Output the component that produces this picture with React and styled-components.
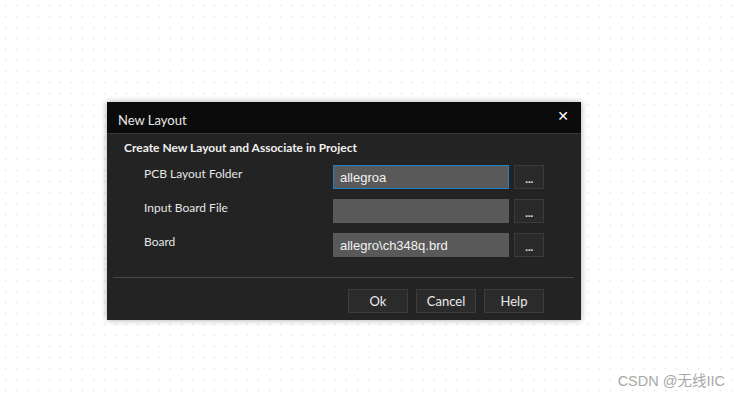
import React from 'react';
import styled, { createGlobalStyle } from 'styled-components';

const GlobalStyle = createGlobalStyle`
  html, body {
    margin: 0;
    padding: 0;
    background: #ffffff;
  }
  body {
    font-family: "Lato", "Open Sans", sans-serif;
  }
`;

const Page = styled.div`
  position: relative;
  width: 733px;
  height: 397px;
  box-sizing: border-box;
  padding: 102px 0 0 107px;
  background-color: #fff;
  background-image: radial-gradient(circle, #ececec 0.8px, transparent 1.2px);
  background-size: 11px 11px;
  overflow: hidden;
`;

const Dialog = styled.div`
  width: 474px;
  height: 218px;
  background: #232323;
  display: flex;
  flex-direction: column;
  box-shadow: 0 0 6px rgba(0, 0, 0, 0.35);
`;

const TitleBar = styled.div`
  height: 32px;
  box-sizing: border-box;
  background: #0b0b0b;
  border-bottom: 1px solid #3a3a3a;
  display: flex;
  align-items: center;
  justify-content: space-between;
  padding: 4px 12px 0 11px;
  color: #e8e8e8;
  font-size: 13px;
`;

const Close = styled.span`
  color: #fff;
  font-family: "DejaVu Sans", sans-serif;
  font-size: 14px;
  font-weight: bold;
  line-height: 1;
  margin-top: -8px;
`;

const Body = styled.div`
  flex: 1;
  display: flex;
  flex-direction: column;
  padding: 2px 7px 0 6px;
`;

const Heading = styled.div`
  color: #f0f0f0;
  font-size: 12px;
  font-weight: 700;
  padding-left: 11px;
  height: 22px;
  display: flex;
  align-items: center;
`;

const Form = styled.div`
  display: grid;
  grid-template-columns: 184px 176px 30px;
  column-gap: 5px;
  row-gap: 10px;
  padding-left: 31px;
  margin-top: 7px;
  align-items: center;
`;

const Label = styled.div`
  color: #e6e6e6;
  font-size: 12px;
  align-self: start;
  padding-top: 1px;
`;

const Field = styled.div`
  height: 24px;
  box-sizing: border-box;
  background: #595959;
  border: 1px solid ${p => (p.focused ? '#1d7fc6' : '#595959')};
  color: #f2f2f2;
  font-family: "Liberation Sans", Arial, sans-serif;
  font-size: 13px;
  display: flex;
  align-items: center;
  padding-left: 6px;
`;

const Browse = styled.div`
  height: 24px;
  box-sizing: border-box;
  background: #2a2a2a;
  border: 1px solid #3b3b3b;
  color: #e0e0e0;
  font-family: "Open Sans", sans-serif;
  font-size: 11px;
  font-weight: 700;
  display: flex;
  align-items: center;
  justify-content: center;
  padding-top: 2px;
  letter-spacing: -0.5px;
`;

const Divider = styled.div`
  height: 1px;
  background: #474747;
  margin: 20px 0 0 0;
`;

const Footer = styled.div`
  display: flex;
  justify-content: flex-end;
  gap: 8px;
  padding: 11px 30px 0 0;
`;

const Button = styled.div`
  width: 60px;
  height: 24px;
  box-sizing: border-box;
  background: #2b2b2b;
  border: 1px solid #3c3c3c;
  color: #ececec;
  font-size: 13px;
  display: flex;
  align-items: center;
  justify-content: center;
`;

const Watermark = styled.div`
  position: absolute;
  right: 8px;
  bottom: 7px;
  color: #a8a8a8;
  font-family: "Liberation Sans", "Noto Sans CJK SC", sans-serif;
  font-size: 14.5px;
`;

const rows = [
  { label: 'PCB Layout Folder', value: 'allegroa', focused: true },
  { label: 'Input Board File', value: '' },
  { label: 'Board', value: 'allegro\\ch348q.brd' },
];

export default function App() {
  return (
    <>
      <GlobalStyle />
      <Page>
        <Dialog>
          <TitleBar>
            <span>New Layout</span>
            <Close>✕</Close>
          </TitleBar>
          <Body>
            <Heading>Create New Layout and Associate in Project</Heading>
            <Form>
              {rows.map(r => (
                <React.Fragment key={r.label}>
                  <Label>{r.label}</Label>
                  <Field focused={r.focused}>{r.value}</Field>
                  <Browse>...</Browse>
                </React.Fragment>
              ))}
            </Form>
            <Divider />
            <Footer>
              <Button>Ok</Button>
              <Button>Cancel</Button>
              <Button>Help</Button>
            </Footer>
          </Body>
        </Dialog>
        <Watermark>CSDN @无线IIC</Watermark>
      </Page>
    </>
  );
}
